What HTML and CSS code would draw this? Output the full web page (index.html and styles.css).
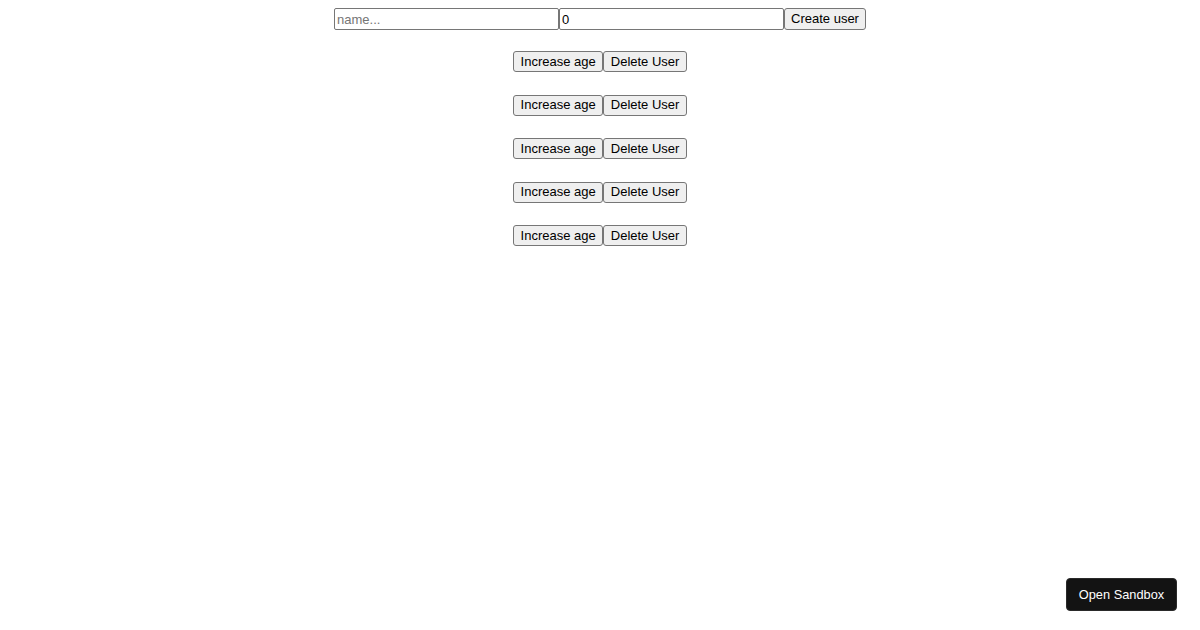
FILE: index.html
```html
<!DOCTYPE html>
<html>
<head>
<meta charset="utf-8">
<link rel="stylesheet" href="styles.css">
</head>
<body>
<div class="app">
  <div class="form"><input class="field" placeholder="name..."><input class="field" value="0"><button class="btn">Create user</button></div>
  <div class="users">
    <div class="user"><button class="btn">Increase age</button><button class="btn">Delete User</button></div>
    <div class="user"><button class="btn">Increase age</button><button class="btn">Delete User</button></div>
    <div class="user"><button class="btn">Increase age</button><button class="btn">Delete User</button></div>
    <div class="user"><button class="btn">Increase age</button><button class="btn">Delete User</button></div>
    <div class="user"><button class="btn">Increase age</button><button class="btn">Delete User</button></div>
  </div>
</div>
<button class="sandbox">Open Sandbox</button>
</body>
</html>
```
FILE: styles.css
```css
html, body { background: #fff; }
body {
  margin: 8px;
  font-family: "Liberation Sans", Arial, sans-serif;
}
.app {
  display: flex;
  flex-direction: column;
  align-items: center;
}
.form {
  display: flex;
  height: 22px;
}
.field {
  box-sizing: border-box;
  width: 225px;
  height: 22px;
  margin: 0;
  padding: 1px 2px;
  border: 1px solid #767676;
  border-radius: 2px;
  font-family: "Liberation Sans", Arial, sans-serif;
  font-size: 13px;
  color: #000;
  background: #fff;
  outline: none;
}
.field::placeholder { color: #757575; }
.btn {
  box-sizing: border-box;
  margin: 0;
  padding: 0 6px 1px;
  border: 1px solid #767676;
  border-radius: 3px;
  background: #efefef;
  color: #000;
  font-family: "Liberation Sans", Arial, sans-serif;
  font-size: 13px;
  line-height: normal;
}
.form .btn { height: 22px; }
.users {
  display: flex;
  flex-direction: column;
  align-items: center;
  row-gap: 22.5px;
  margin-top: 21px;
}
.user {
  display: flex;
  height: 21px;
}
.user .btn {
  height: 21px;
  padding-left: 6.5px;
  padding-right: 6.5px;
}
.sandbox {
  position: fixed;
  right: 23px;
  bottom: 19px;
  width: 111px;
  height: 33px;
  padding: 0;
  border: 1px solid #2a2a2a;
  border-radius: 4px;
  background: #131313;
  color: #fff;
  font-family: "Liberation Sans", Arial, sans-serif;
  font-size: 12.8px;
}
```
